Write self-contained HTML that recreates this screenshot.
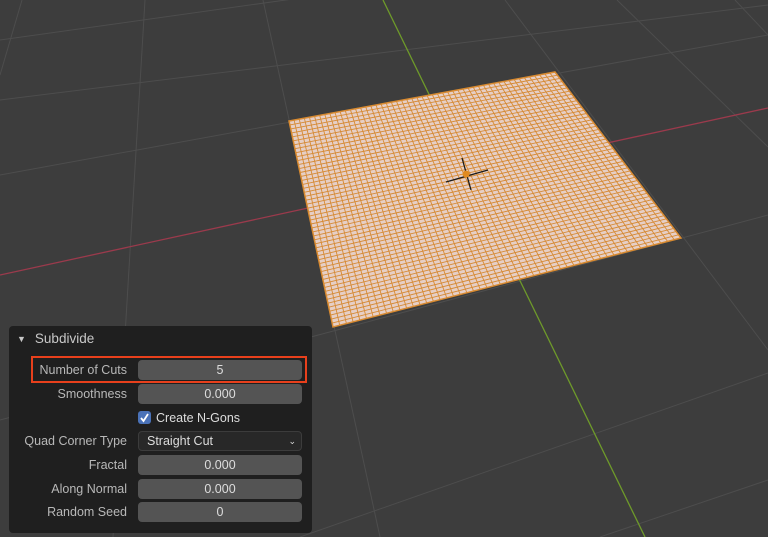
<!DOCTYPE html>
<html><head><meta charset="utf-8"><style>
html,body{margin:0;padding:0;width:768px;height:537px;overflow:hidden;background:#3d3d3d;font-family:"Liberation Sans","DejaVu Sans",sans-serif}
svg{position:absolute;left:0;top:0}
.panel{position:absolute;left:9px;top:326px;width:303px;height:207px;background:#1f1f1f;border-radius:4px}
.hdr{position:absolute;left:8px;top:5px;color:#c8c8c8;font-size:13.5px}
.hdr span{font-size:9px;margin-right:9px;position:relative;top:-1px}
.row{position:absolute;left:0;width:303px;height:20px}
.lbl{position:absolute;right:185px;top:0;line-height:20px;color:#b8b8b8;font-size:12.5px;white-space:nowrap}
.fld{position:absolute;left:129px;width:164px;height:20px;top:0;background:#545454;border-radius:4px;color:#ddd;font-size:12.5px;text-align:center;line-height:20px}
.dd{background:#282828;border:1px solid #3c3c3c;box-sizing:border-box;text-align:left;padding-left:8px;line-height:18px}
.red{position:absolute;left:22px;top:30px;width:276px;height:27px;border:2px solid #e8401c;box-sizing:border-box}
.cb{position:absolute;left:129px;top:3px;width:13px;height:13px;background:#4a72b8;border-radius:3px}
</style></head><body>
<svg width="768" height="537">
<g stroke="#4d4d4d" stroke-width="1" fill="none">
<line x1="0" y1="40" x2="500" y2="-30"/>
<line x1="0" y1="100" x2="768" y2="5"/>
<line x1="0" y1="175" x2="768" y2="35"/>
<line x1="0" y1="420" x2="768" y2="215"/>
<line x1="768" y1="373" x2="300" y2="537"/>
<line x1="768" y1="480" x2="600" y2="537"/>
<line x1="0" y1="75" x2="22" y2="0"/>
<line x1="113" y1="537" x2="145" y2="0"/>
<line x1="263" y1="0" x2="380" y2="537"/>
<line x1="505" y1="0" x2="768" y2="350"/>
<line x1="617" y1="0" x2="768" y2="147"/>
<line x1="735" y1="0" x2="768" y2="35"/>
</g>
<line x1="0" y1="275" x2="768" y2="108" stroke="#9b3a4c" stroke-width="1.3"/>
<line x1="383" y1="0" x2="645" y2="537" stroke="#6e9a2a" stroke-width="1.3"/>
<polygon points="289,121 555,72 681,238 333,327" fill="#e6cfc6" stroke="#d88a30" stroke-width="1.5"/>
<g id="mesh" stroke="#d68a34" stroke-width="0.9"></g>
<g stroke="#1a1a1a" stroke-width="1.3">
<line x1="446" y1="182" x2="488" y2="170"/>
<line x1="462" y1="158" x2="471" y2="190"/>
</g>
<circle cx="466" cy="174" r="3.5" fill="#e08a20"/>
</svg>
<div class="panel">
<div class="hdr"><span>▼</span>Subdivide</div>
<div class="row" style="top:34px"><div class="lbl">Number of Cuts</div><div class="fld">5</div></div>
<div class="row" style="top:58px"><div class="lbl">Smoothness</div><div class="fld">0.000</div></div>
<div class="row" style="top:82px"><div class="cb"><svg width="13" height="13"><path d="M3 7 L5.5 10 L10 3" stroke="#fff" stroke-width="1.8" fill="none"/></svg></div><div style="position:absolute;left:147px;top:0;line-height:20px;color:#ddd;font-size:12.5px">Create N-Gons</div></div>
<div class="row" style="top:105px"><div class="lbl">Quad Corner Type</div><div class="fld dd">Straight Cut<span style="position:absolute;right:5px;font-size:9px">&#8964;</span></div></div>
<div class="row" style="top:129px"><div class="lbl">Fractal</div><div class="fld">0.000</div></div>
<div class="row" style="top:153px"><div class="lbl">Along Normal</div><div class="fld">0.000</div></div>
<div class="row" style="top:176px"><div class="lbl">Random Seed</div><div class="fld">0</div></div>
<div class="red"></div>
</div>
<script>
var A=[289,121],B=[555,72],C=[681,238],D=[333,327],N=52,g=document.getElementById('mesh'),s='';
function L(p,q,t){return[p[0]+(q[0]-p[0])*t,p[1]+(q[1]-p[1])*t]}
for(var i=1;i<N;i++){var t=i/N;var a=L(A,B,t),b=L(D,C,t);s+='<line x1="'+a[0]+'" y1="'+a[1]+'" x2="'+b[0]+'" y2="'+b[1]+'"/>';a=L(A,D,t);b=L(B,C,t);s+='<line x1="'+a[0]+'" y1="'+a[1]+'" x2="'+b[0]+'" y2="'+b[1]+'"/>';}
g.innerHTML=s;
</script>
</body></html>
